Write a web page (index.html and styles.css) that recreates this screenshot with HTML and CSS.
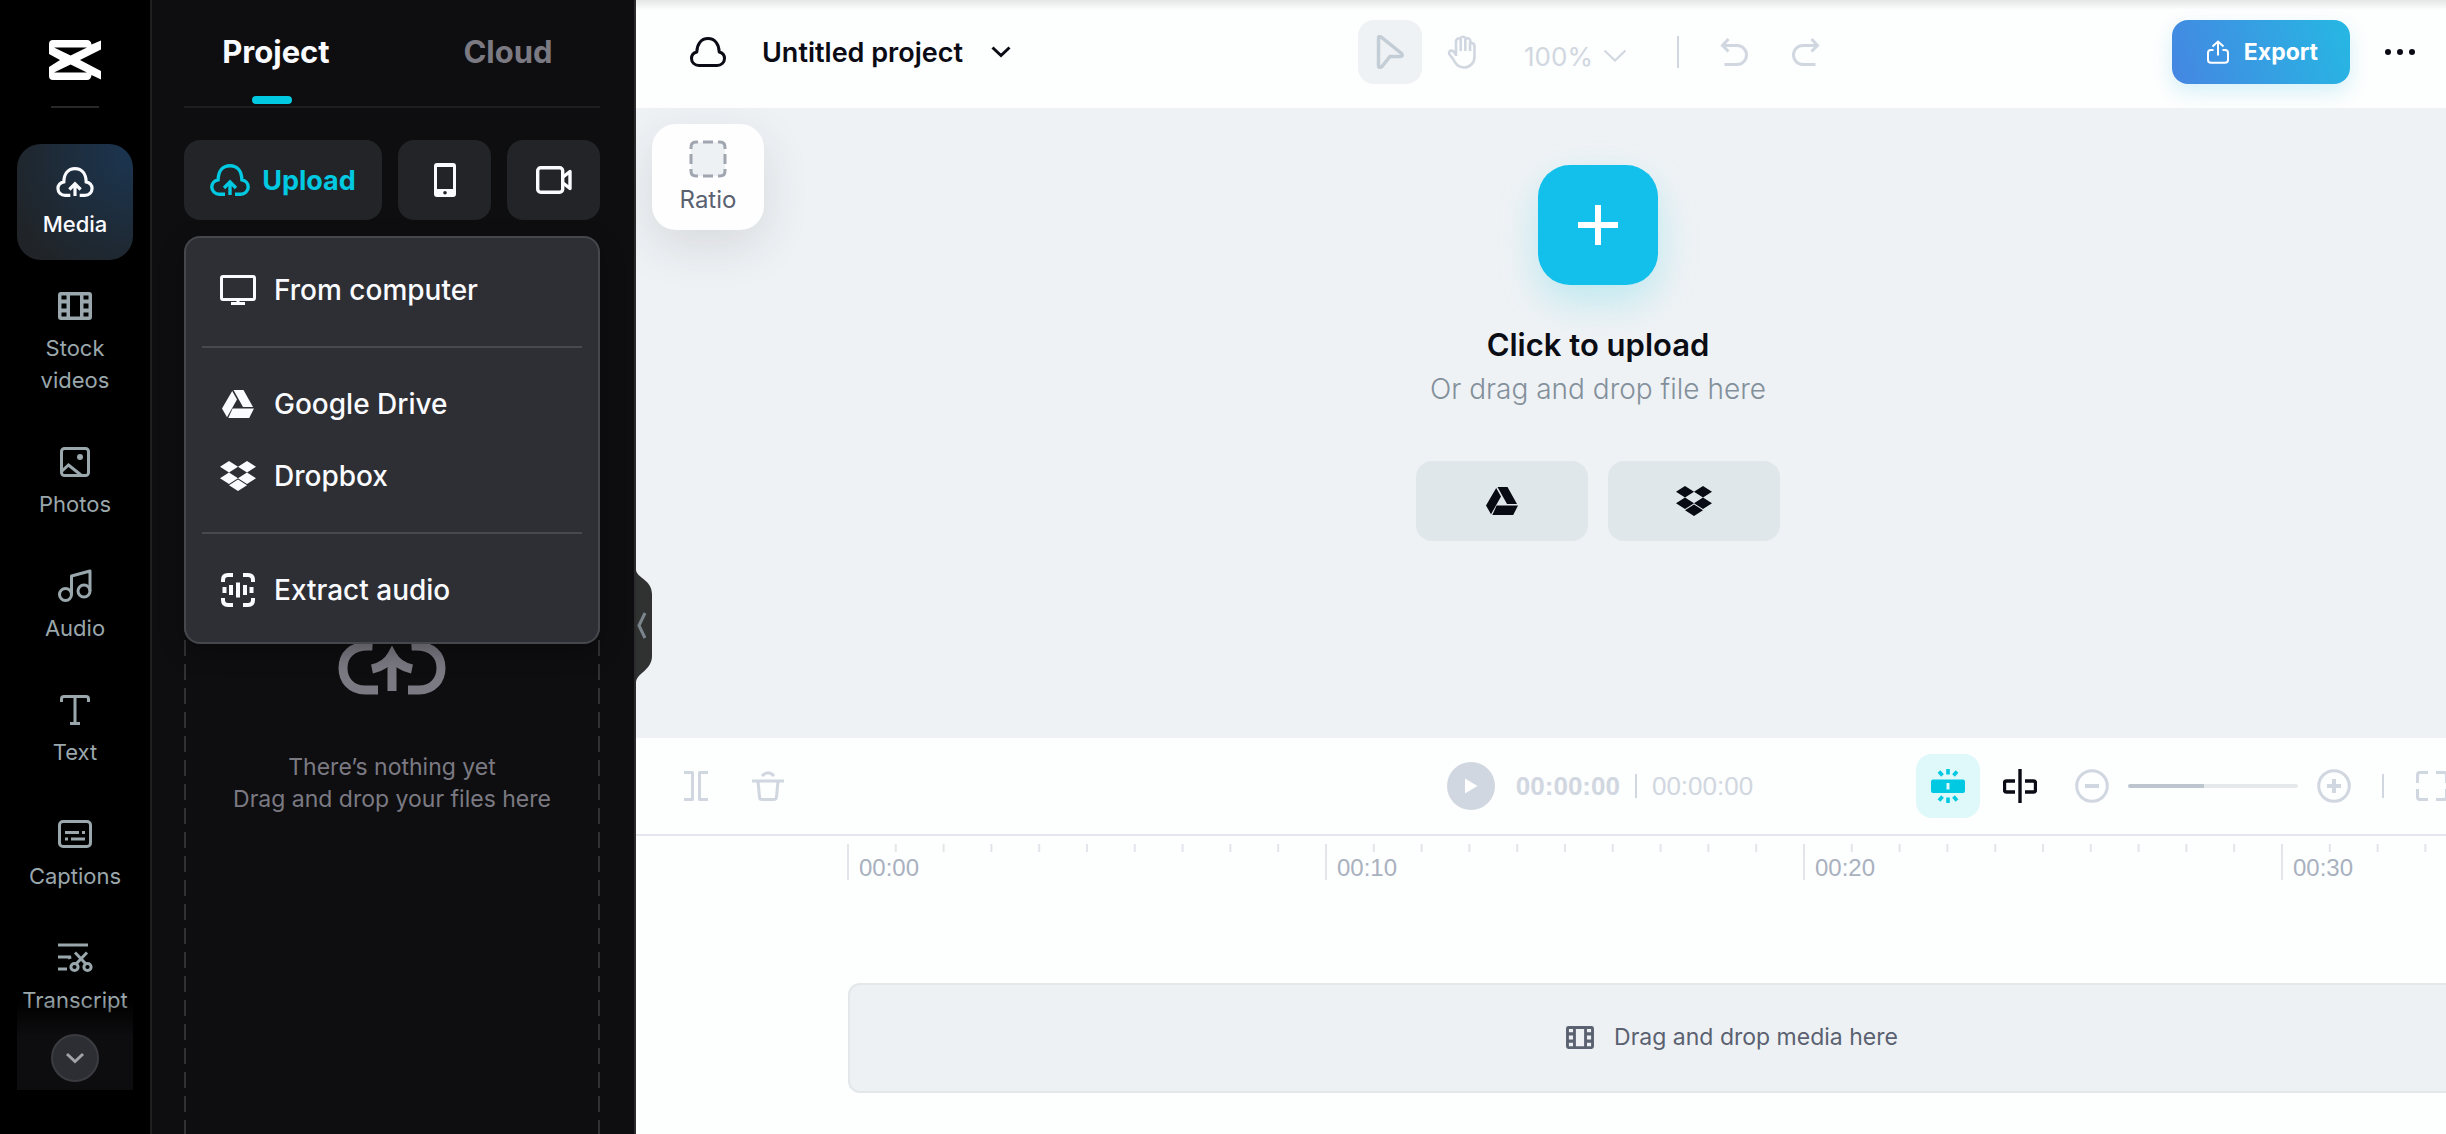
FILE: index.html
```html
<!DOCTYPE html>
<html lang="en">
<head>
<meta charset="utf-8">
<title>Untitled project</title>
<link rel="stylesheet" href="styles.css">
</head>
<body>
<svg class="sprite" aria-hidden="true">
  <symbol id="cloud-up" viewBox="0 0 40 32"><path d="M15 30.300H9.500C5 30.300 1.800 27 1.800 23c0-3.600 2.600-6.500 6.300-7.200C8.300 7.500 12.500 1.700 20 1.700s11.700 5.800 11.900 14.100c3.700.7 6.300 3.600 6.300 7.200 0 4-3.200 7.300-7.700 7.300H25M20 31V19M14 24l6-6 6 6" fill="none" stroke="currentColor" stroke-width="3.400"/></symbol>
  <symbol id="cloud" viewBox="0 0 36 30"><path d="M9 28.500C4.800 28.500 1.500 25.500 1.500 21.500c0-3 2-5.700 5.300-6.500C7 7.200 11 1.500 18 1.500S29 7.200 29.200 15c3.300.8 5.300 3.500 5.300 6.500 0 4-3.300 7-7.500 7Z" fill="none" stroke="currentColor" stroke-width="3" stroke-linejoin="round"/></symbol>
  <symbol id="film" viewBox="0 0 34 28"><path fill-rule="evenodd" d="M3 0H31Q34 0 34 3V25Q34 28 31 28H3Q0 28 0 25V3Q0 0 3 0ZM12 3.500V24.500H22V3.500ZM3.500 3.500V7.500H8.500V3.500ZM3.500 11.500V16.500H8.500V11.500ZM3.500 20.500V24.500H8.500V20.500ZM25.500 3.500V7.500H30.500V3.500ZM25.500 11.500V16.500H30.500V11.500ZM25.500 20.500V24.500H30.500V20.500Z" fill="currentColor"/></symbol>
  <symbol id="drive" viewBox="0 0 32 28"><path d="M10.200 1 15 9.500 5 27.300 0 18.500ZM11.500 0H21.500L31 17H21ZM10.600 18.600H32L27.200 28H6.300Z" fill="currentColor"/></symbol>
  <symbol id="dropbox" viewBox="0 0 36 30"><path d="M9 0 18 5.700 9 11.500 0 5.700ZM27 0 36 5.700 27 11.500 18 5.700ZM9 11.500 18 17.200 9 23 0 17.200ZM27 11.500 36 17.200 27 23 18 17.200ZM18 18.500 27 24.200 18 30 9 24.200Z" fill="currentColor"/></symbol>
  <symbol id="undo" viewBox="0 0 28 30"><path d="M8.500 2 2.500 8.500 8.500 14.500M3 8.500H17A9.500 9.500 0 0 1 17 27.500H4.500" fill="none" stroke="currentColor" stroke-width="3"/></symbol>
</svg>

<div class="app">
  <aside class="rail">
    <a class="logo" href="#" aria-label="Home"><svg width="52" height="40" viewBox="0 0 52 40"><path fill="currentColor" fill-rule="evenodd" d="M4 0H38Q42 0 42.500 4.500L52 .5V9.500L31 20 52 31V39.500L42.500 35Q42 40 38 40H4Q0 40 0 36V27L11 20 0 14V4Q0 0 4 0ZM5 7.500 21.600 15.500 38 7.500ZM5 32.500 21.600 24.500 38 32.500Z"/></svg></a>
    <hr class="rail-line">
    <nav class="rail-nav">
      <button class="rail-item active"><span class="rail-icon"><svg width="38" height="30"><use href="#cloud-up"/></svg></span>Media</button>
      <button class="rail-item"><span class="rail-icon"><svg width="34" height="28"><use href="#film"/></svg></span>Stock videos</button>
      <button class="rail-item"><span class="rail-icon"><svg width="30" height="30" viewBox="0 0 30 30"><rect x="1.500" y="1.500" width="27" height="27" rx="3" fill="none" stroke="currentColor" stroke-width="3"/><circle cx="20" cy="10" r="3" fill="currentColor"/><path d="M2 24 8.500 18 21 28" fill="none" stroke="currentColor" stroke-width="3"/></svg></span>Photos</button>
      <button class="rail-item"><span class="rail-icon"><svg width="34" height="34" viewBox="0 0 34 34"><g fill="none" stroke="currentColor" stroke-width="3" stroke-linejoin="round"><circle cx="7.500" cy="25.500" r="6"/><circle cx="26" cy="22" r="6"/><path d="M13.500 26V7L32 2V22"/></g></svg></span>Audio</button>
      <button class="rail-item"><span class="rail-icon"><svg width="30" height="30" viewBox="0 0 30 30"><path d="M1.500 7V4Q1.500 1.500 4 1.500H26Q28.500 1.500 28.500 4V7M15 2V28M10 28.500H20" fill="none" stroke="currentColor" stroke-width="3"/></svg></span>Text</button>
      <button class="rail-item"><span class="rail-icon"><svg width="34" height="28" viewBox="0 0 34 28"><rect x="1.500" y="1.500" width="31" height="25" rx="3.500" fill="none" stroke="currentColor" stroke-width="3"/><path d="M7 12.500H21M24 12.500H27M7 19H10M13 19H27" fill="none" stroke="currentColor" stroke-width="3"/></svg></span>Captions</button>
      <button class="rail-item"><span class="rail-icon"><svg width="36" height="30" viewBox="0 0 36 30"><g fill="none" stroke="currentColor" stroke-width="3"><path d="M1 2H31M1 14H14L11 15M1 26H10"/><circle cx="17.500" cy="24" r="3.600"/><circle cx="30.500" cy="24" r="3.600"/><path d="M18 9.500 29 21M30 9.500 19 21"/></g></svg></span>Transcript</button>
    </nav>
    <div class="rail-more"><button class="more-button" aria-label="More tools"><svg width="20" height="12" viewBox="0 0 20 12"><path d="M2 2 10 9.500 18 2" fill="none" stroke="currentColor" stroke-width="3"/></svg></button></div>
  </aside>

  <section class="panel">
    <div class="tabs" role="tablist">
      <button class="tab active" role="tab" aria-selected="true">Project</button>
      <button class="tab" role="tab" aria-selected="false">Cloud</button>
    </div>
    <div class="sources">
      <button class="source upload"><svg width="40" height="32"><use href="#cloud-up"/></svg>Upload</button>
      <button class="source" aria-label="Upload from phone"><svg width="22" height="34" viewBox="0 0 22 34"><path fill-rule="evenodd" d="M3 0H19Q22 0 22 3V31Q22 34 19 34H3Q0 34 0 31V3Q0 0 3 0ZM3 4V26H19V4ZM11 28A1.800 1.800 0 1 0 11 31.600 1.800 1.800 0 1 0 11 28Z" fill="currentColor"/></svg></button>
      <button class="source" aria-label="Record"><svg width="36" height="28" viewBox="0 0 36 28"><g fill="none" stroke="currentColor" stroke-width="3.400"><rect x="1.700" y="1.700" width="25" height="24.600" rx="3"/><path d="M27 11 34 5.500V22.500L27 17" stroke-linejoin="round"/></g></svg></button>
    </div>
    <div class="dropzone">
      <svg width="108" height="86" viewBox="0 0 108 86"><path d="M40 81H27C13 81 5 71 5 59c0-13 9-22 25-22C31 17 38 5 54 5s23 12 24 32c16 0 25 9 25 22 0 12-8 22-22 22H70M54 82V54M34 60Q48 57 54 46 60 57 74 60" fill="none" stroke="currentColor" stroke-width="9"/></svg>
      <p>There’s nothing yet<br>Drag and drop your files here</p>
    </div>
    <div class="menu" role="menu">
      <button class="menu-item" role="menuitem"><svg width="36" height="30" viewBox="0 0 36 30"><path d="M3 1.500H33Q34.500 1.500 34.500 3V23Q34.500 24.500 33 24.500H3Q1.500 24.500 1.500 23V3Q1.500 1.500 3 1.500ZM18 24V29M11 28.500H25" fill="none" stroke="currentColor" stroke-width="3"/></svg>From computer</button>
      <hr>
      <button class="menu-item" role="menuitem"><svg width="36" height="28"><use href="#drive"/></svg>Google Drive</button>
      <button class="menu-item" role="menuitem"><svg width="36" height="30"><use href="#dropbox"/></svg>Dropbox</button>
      <hr>
      <button class="menu-item" role="menuitem"><svg width="36" height="34" viewBox="0 0 36 34"><path d="M13 2H8Q3 2 3 7V9M23 2H28Q33 2 33 7V9M13 32H8Q3 32 3 27V25M23 32H28Q33 32 33 27V25M4.500 14V20M11 12V22M18 9.500V24.500M25 12V22M31.500 14V20" fill="none" stroke="currentColor" stroke-width="4"/></svg>Extract audio</button>
    </div>
  </section>

  <main class="work">
    <header class="topbar">
      <div class="project">
        <svg width="36" height="30"><use href="#cloud"/></svg>
        <button class="project-name">Untitled project<svg width="20" height="12" viewBox="0 0 20 12"><path d="M1.500 1.500 10 9.500 18.500 1.500" fill="none" stroke="currentColor" stroke-width="3"/></svg></button>
      </div>
      <div class="tools">
        <button class="tool selected" aria-label="Select"><svg width="28" height="34" viewBox="0 0 28 34"><path d="M2.500 3.500Q2.500 .5 5 2L25.500 18.500Q27.500 21.500 24 21.500H14L6 31.500Q2.500 33.500 2.500 30.500Z" fill="none" stroke="currentColor" stroke-width="3.500"/></svg></button>
        <button class="tool" aria-label="Pan"><svg width="30" height="34" viewBox="0 0 30 34"><path d="M9 21V6.500Q9 4 11.500 3.500H13Q16 0 19 3.500 23 2.500 23.500 6.500V8Q27.500 8 27.500 11V22C27.500 28 22.500 32.500 17 32.500S9 29.500 6 24L2.200 19Q1.500 15.500 4.500 15.500 7 16 9 20M13.700 4V16M18.300 4V16M23 7V16" fill="none" stroke="currentColor" stroke-width="2.600"/></svg></button>
        <button class="zoom">100%<svg width="24" height="14" viewBox="0 0 24 14"><path d="M1.500 1.500 12 11.500 22.500 1.500" fill="none" stroke="currentColor" stroke-width="2"/></svg></button>
        <span class="divider tall"></span>
        <button class="tool" aria-label="Undo"><svg width="28" height="30"><use href="#undo"/></svg></button>
        <button class="tool redo" aria-label="Redo"><svg width="28" height="30"><use href="#undo"/></svg></button>
      </div>
      <div class="actions">
        <button class="export"><svg width="22" height="24" viewBox="0 0 22 24"><path d="M6.500 10H4Q1 10 1 13V20Q1 22.800 4 22.800H18Q21 22.800 21 20V13Q21 10 18 10H15.500M11 15.500V2M5.500 6.500 11 1.500 16.500 6.500" fill="none" stroke="currentColor" stroke-width="2"/></svg>Export</button>
        <button class="dots" aria-label="More"><svg width="30" height="6" viewBox="0 0 30 6"><g fill="currentColor"><circle cx="3" cy="3" r="3"/><circle cx="15" cy="3" r="3"/><circle cx="27" cy="3" r="3"/></g></svg></button>
      </div>
    </header>

    <section class="stage">
      <button class="ratio"><svg width="38" height="38" viewBox="0 0 38 38"><rect x="2" y="2" width="34" height="34" rx="5" fill="#eef1f3"/><path d="M9 2H7Q2 2 2 7V9M29 2H31Q36 2 36 7V9M9 36H7Q2 36 2 31V29M29 36H31Q36 36 36 31V29M14 2H24M14 36H24M2 14V24M36 14V24" fill="none" stroke="currentColor" stroke-width="3"/></svg>Ratio</button>
      <button class="collapse" aria-label="Hide panel"><svg width="16" height="112" viewBox="0 0 16 112"><path d="M0 0C1 8 16 10 16 24V86C16 100 1 103 0 112Z" fill="#303232"/><path d="M9 43 3 55.500 9 68" fill="none" stroke="#7c858d" stroke-width="3"/></svg></button>
      <div class="upload-card">
        <button class="add" aria-label="Add media"><svg width="40" height="40" viewBox="0 0 40 40"><path d="M20 0V40M0 20H40" stroke="currentColor" stroke-width="6"/></svg></button>
        <h1>Click to upload</h1>
        <p>Or drag and drop file here</p>
        <div class="services">
          <button class="service" aria-label="Google Drive"><svg width="32" height="28"><use href="#drive"/></svg></button>
          <button class="service" aria-label="Dropbox"><svg width="36" height="30"><use href="#dropbox"/></svg></button>
        </div>
      </div>
    </section>

    <section class="timeline">
      <div class="timebar">
        <div class="edit">
          <button class="tool" aria-label="Split"><svg width="24" height="30" viewBox="0 0 24 30"><path d="M0 1.500H8.500V28.500H0M24 1.500H15.500V28.500H24" fill="none" stroke="currentColor" stroke-width="3" stroke-linejoin="round"/></svg></button>
          <button class="tool" aria-label="Delete"><svg width="32" height="30" viewBox="0 0 32 30"><path d="M0 10H32M10 5Q16-1.500 22 5M6 10 7.500 26Q7.700 28.500 10 28.500H22Q24.300 28.500 24.500 26L26 10" fill="none" stroke="currentColor" stroke-width="3"/></svg></button>
        </div>
        <div class="playback">
          <button class="play" aria-label="Play"><svg width="14" height="16" viewBox="0 0 14 16"><path d="M1 .5 13.500 8 1 15.500Z" fill="#fff"/></svg></button>
          <time class="current">00:00:00</time>
          <span class="divider"></span>
          <time>00:00:00</time>
        </div>
        <div class="view">
          <button class="tool snap" aria-label="Snapping"><svg width="34" height="34" viewBox="0 0 34 34"><path fill-rule="evenodd" d="M2 10.500H32Q34 10.500 34 12.500V22Q34 24 32 24H2Q0 24 0 22V12.500Q0 10.500 2 10.500ZM15.500 14V20.500H18.500V14Z" fill="currentColor"/><path d="M17 0V5.500M17 28.500V34M8 2.500 11.500 6.500M26 2.500 22.500 6.500M8 31.500 11.500 27.500M26 31.500 22.500 27.500" stroke="currentColor" stroke-width="3.600"/></svg></button>
          <button class="tool dark" aria-label="Preview axis"><svg width="34" height="34" viewBox="0 0 34 34"><path d="M12 12H3.500Q1.500 12 1.500 14V21Q1.500 23 3.500 23H12M22 12H30.500Q32.500 12 32.500 14V21Q32.500 23 30.500 23H22M17 0V34" fill="none" stroke="currentColor" stroke-width="3.400"/></svg></button>
          <button class="tool" aria-label="Zoom out"><svg width="34" height="34" viewBox="0 0 34 34"><circle cx="17" cy="17" r="15.300" fill="none" stroke="currentColor" stroke-width="3"/><path d="M10 17H24" stroke="currentColor" stroke-width="4"/></svg></button>
          <input class="scale" type="range" min="0" max="100" value="45" aria-label="Timeline zoom">
          <button class="tool" aria-label="Zoom in"><svg width="34" height="34" viewBox="0 0 34 34"><circle cx="17" cy="17" r="15.300" fill="none" stroke="currentColor" stroke-width="3"/><path d="M10 17H24M17 10V24" stroke="currentColor" stroke-width="4"/></svg></button>
          <span class="divider"></span>
          <button class="tool" aria-label="Fit timeline"><svg width="32" height="30" viewBox="0 0 32 30"><path d="M12 1.500H4Q1.500 1.500 1.500 4V12M20 1.500H28Q30.500 1.500 30.500 4V12M12 28.500H4Q1.500 28.500 1.500 26V18M20 28.500H28Q30.500 28.500 30.500 26V18" fill="none" stroke="currentColor" stroke-width="3"/></svg></button>
        </div>
      </div>
      <div class="tracks">
        <ol class="ruler"><li>00:00</li><li>00:10</li><li>00:20</li><li>00:30</li></ol>
        <div class="track"><svg width="28" height="23"><use href="#film"/></svg>Drag and drop media here</div>
      </div>
    </section>
  </main>
</div>
</body>
</html>
```
FILE: styles.css
```css
* { box-sizing: border-box; }

body {
  margin: 0;
  height: 100vh;
  overflow: hidden;
  background: #fdfefe;
  font-family: Inter, "Noto Sans", sans-serif;
  font-size: 24px;
}

button {
  margin: 0;
  padding: 0;
  border: 0;
  background: none;
  color: inherit;
  font: inherit;
  cursor: pointer;
}

svg { display: block; flex: none; }
hr { margin: 0; border: 0; }
.sprite { position: absolute; width: 0; height: 0; }

.app {
  display: flex;
  width: calc(100% + 114px);
  height: 100%;
}

/* Tool rail */
.rail {
  position: relative;
  flex: none;
  display: flex;
  flex-direction: column;
  align-items: center;
  width: 152px;
  padding: 40px 0 44px;
  border-right: 2px solid #1e1f21;
  background: #000;
}
.logo { color: #fff; }
.rail-line { flex: none; width: 48px; height: 2px; margin: 26px 0 36px; background: #27282a; }
.rail-nav {
  flex: 1;
  min-height: 0;
  display: flex;
  flex-direction: column;
  gap: 8px;
  width: 116px;
}
.rail-item {
  flex: none;
  display: flex;
  flex-direction: column;
  align-items: center;
  gap: 6px;
  padding: 18px 0 20px;
  border-radius: 24px;
  color: #9aa7ac;
  font-size: 22px;
  line-height: 32px;
  text-align: center;
}
.rail-item.active {
  background: radial-gradient(circle at 100% 10%, #1b3550, #202428 85%);
  color: #fafbff;
  font-weight: 500;
}
.rail-icon { display: grid; place-items: center; height: 40px; }
.rail-more {
  position: absolute;
  bottom: 44px;
  display: grid;
  place-items: center;
  width: 116px;
  height: 90px;
  padding-top: 26px;
  background: linear-gradient(transparent, #0d0d0f 40%);
}
.more-button {
  display: grid;
  place-items: center;
  width: 48px;
  height: 48px;
  border: 2px solid #3b3c41;
  border-radius: 50%;
  background: #2d2e33;
  color: #a0a3a8;
}

/* Media panel */
.panel {
  position: relative;
  flex: none;
  display: flex;
  flex-direction: column;
  width: 484px;
  padding: 0 34px 0 32px;
  border-right: 2px solid #2b2b2e;
  background: #0e0e10;
}
.tabs {
  flex: none;
  display: flex;
  gap: 48px;
  height: 108px;
  border-bottom: 2px solid #1d1e20;
}
.tab {
  position: relative;
  flex: 1;
  padding-bottom: 4px;
  color: #7b7a83;
  font-size: 31px;
  font-weight: 700;
}
.tab.active { color: #fafbff; }
.tab.active::after {
  content: "";
  position: absolute;
  bottom: 2px;
  left: 50%;
  width: 40px;
  height: 8px;
  margin-left: -24px;
  border-radius: 4px;
  background: #00c9e1;
}
.sources {
  flex: none;
  display: grid;
  grid-template-columns: 1fr 93px 93px;
  gap: 16px;
  height: 80px;
  margin-top: 32px;
}
.source {
  display: flex;
  align-items: center;
  justify-content: center;
  gap: 12px;
  border-radius: 16px;
  background: #222427;
  color: #fafbff;
}
.source.upload { color: #00c9e1; font-size: 27px; font-weight: 700; }
.menu {
  position: absolute;
  top: 236px;
  left: 32px;
  right: 34px;
  padding: 16px;
  border: 2px solid #46474d;
  border-radius: 16px;
  background: #2e2f34;
  box-shadow: 0 8px 24px rgba(0, 0, 0, .3);
}
.menu hr { height: 2px; margin: 20px 0; background: #48494e; }
.menu-item {
  display: flex;
  align-items: center;
  gap: 18px;
  width: 100%;
  height: 72px;
  padding-left: 18px;
  color: #fafbff;
  font-size: 28px;
  font-weight: 500;
}
.dropzone {
  flex: 1;
  display: flex;
  flex-direction: column;
  align-items: center;
  gap: 56px;
  margin-top: 36px;
  padding-top: 353px;
  background:
    repeating-linear-gradient(#303135 0 16px, transparent 16px 24px) left / 2px 100% no-repeat,
    repeating-linear-gradient(#303135 0 16px, transparent 16px 24px) right / 2px 100% no-repeat;
  color: #7b7a83;
  font-size: 23px;
  line-height: 32px;
  text-align: center;
}
.dropzone p { margin: 0; }

/* Workspace */
.work {
  flex: 1;
  min-width: 0;
  display: flex;
  flex-direction: column;
}
.topbar {
  flex: none;
  display: grid;
  grid-template-columns: 1fr auto 1fr;
  align-items: center;
  height: 108px;
  padding: 0 136px 4px 54px;
  background: linear-gradient(#e4e5e5, #fdfefe 10px);
}
.topbar .tools { margin-left: 82px; }
.project { display: flex; align-items: center; gap: 36px; color: #0b0b15; }
.project-name { display: flex; align-items: center; gap: 28px; font-size: 27px; font-weight: 600; }
.tools, .edit, .view, .playback, .actions { display: flex; align-items: center; }
.tools, .edit, .view { gap: 8px; color: #d1d7e0; }
.tool {
  display: grid;
  place-items: center;
  width: 64px;
  height: 64px;
  border-radius: 16px;
}
.tool.selected { background: #eff2f5; color: #c3cdd5; }
.tool.redo svg { transform: scaleX(-1); }
.zoom {
  display: flex;
  align-items: center;
  gap: 10px;
  width: 152px;
  padding: 8px 0 0 22px;
  font-size: 26px;
}
.divider { width: 2px; height: 24px; background: #d1d7e0; }
.divider.tall { height: 32px; margin: 0 15px; }
.actions { justify-content: flex-end; gap: 26px; }
.export {
  display: flex;
  align-items: center;
  gap: 15px;
  height: 64px;
  padding: 0 32px 0 35px;
  border-radius: 16px;
  background: linear-gradient(70deg, #4586e2, #26b8e3);
  box-shadow: 0 8px 20px rgba(0, 170, 220, .16);
  color: #fff;
  font-size: 23px;
  font-weight: 700;
}
.dots { display: grid; place-items: center; width: 48px; height: 48px; color: #0b0b15; }

.stage {
  position: relative;
  flex: 1;
  overflow: hidden;
  background: #eff2f5;
}
.ratio {
  position: absolute;
  top: 16px;
  left: 16px;
  display: flex;
  flex-direction: column;
  align-items: center;
  gap: 6px;
  width: 112px;
  height: 106px;
  padding-top: 16px;
  border-radius: 24px;
  background: #fefefe;
  box-shadow: 0 16px 48px rgba(30, 45, 50, .12);
  color: #5a6170;
  font-size: 24px;
  line-height: 32px;
}
.ratio svg { color: #9fa6b0; }
.collapse { position: absolute; top: 462px; left: 0; }
.upload-card {
  display: flex;
  flex-direction: column;
  align-items: center;
  padding-top: 57px;
}
.add {
  display: grid;
  place-items: center;
  width: 120px;
  height: 120px;
  border-radius: 32px;
  background: #13c0eb;
  box-shadow: 0 16px 40px rgba(0, 202, 224, .22);
  color: #fff;
}
.upload-card h1 {
  margin: 40px 0 0;
  color: #0b0d15;
  font-size: 31px;
  font-weight: 600;
  line-height: 40px;
}
.upload-card p {
  margin: 4px 0 0;
  color: #83909b;
  font-size: 28px;
  font-weight: 300;
  line-height: 40px;
}
.services { display: flex; gap: 20px; margin-top: 52px; }
.service {
  display: grid;
  place-items: center;
  width: 172px;
  height: 80px;
  border-radius: 16px;
  background: #e0e7ea;
  color: #080b13;
}

/* Timeline */
.timeline { flex: none; }
.timebar {
  display: grid;
  grid-template-columns: 1fr auto 1fr;
  align-items: center;
  height: 98px;
  padding: 0 96px 0 28px;
  border-bottom: 2px solid #e4e7ed;
}
.playback { gap: 15px; margin-left: 72px; color: #d1d7e0; }
.playback time { font-family: "Liberation Sans", sans-serif; font-size: 26px; }
.playback .current { margin-left: 6px; font-weight: 700; }
.play {
  display: grid;
  place-items: center;
  width: 48px;
  height: 48px;
  border-radius: 50%;
  background: #d1d7e0;
}
.view { justify-content: flex-end; }
.view .divider { margin: 0 8px; }
.tool.snap { background: #dff8fa; color: #00c9e1; }
.tool.dark { color: #0b0b15; }
.scale {
  width: 170px;
  height: 4px;
  margin: 0 -4px;
  border-radius: 2px;
  appearance: none;
  background: linear-gradient(90deg, #bdc6cf 45%, #e5e9ec 45%);
}
.scale::-webkit-slider-thumb { appearance: none; width: 4px; height: 4px; background: transparent; }
.tracks { height: 298px; padding: 8px 0 0 211px; }
.ruler {
  display: flex;
  height: 36px;
  margin: 0;
  padding: 0;
  overflow: hidden;
  list-style: none;
}
.ruler li {
  flex: 0 0 478px;
  padding: 8px 0 0 10px;
  border-left: 2px solid #e2e5ea;
  background: linear-gradient(90deg, #e2e5ea 2px, transparent 2px) 0 0 / 10% 8px repeat-x border-box;
  color: #a9b1bf;
  font-family: "Liberation Sans", sans-serif;
  line-height: 32px;
}
.track {
  display: flex;
  align-items: center;
  justify-content: center;
  gap: 20px;
  height: 110px;
  margin: 103px -56px 0 1px;
  padding-bottom: 2px;
  border: 2px solid #e2e7ea;
  border-radius: 12px;
  background: #eef1f4;
  color: #5a6170;
  font-size: 23px;
}
```
